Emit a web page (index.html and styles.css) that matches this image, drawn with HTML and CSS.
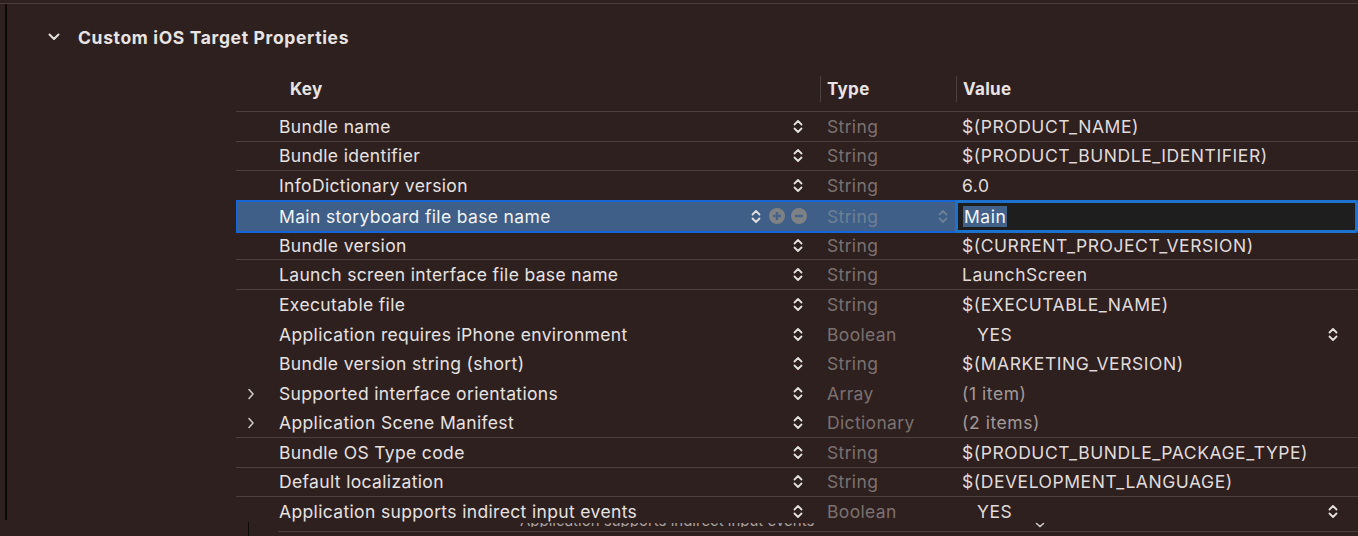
FILE: index.html
```html
<!DOCTYPE html>
<html>
<head>
<meta charset="utf-8">
<link rel="stylesheet" href="styles.css">
</head>
<body>
<div class="window">
  <div class="pane">
    <div class="section-title">
      <svg class="chev-down" width="12" height="8" viewBox="0 0 12 8"><path d="M1.5 1.5 L6 6 L10.5 1.5" fill="none" stroke="#e4e0df" stroke-width="2" stroke-linecap="round" stroke-linejoin="round"/></svg>
      <span>Custom iOS Target Properties</span>
    </div>
    <div class="table">
      <div class="thead">
        <div class="h-key">Key</div>
        <div class="h-type">Type</div>
        <div class="h-value">Value</div>
      </div>

      <div class="row sep">
        <div class="key"><span class="disc"></span><span class="name">Bundle name</span><span class="ctrl"><svg class="step" viewBox="0 0 10 16"><path d="M1.5 6 L5 2.5 L8.5 6 M1.5 10 L5 13.5 L8.5 10"/></svg></span></div>
        <div class="type">String</div>
        <div class="value">$(PRODUCT_NAME)</div>
      </div>
      <div class="row sep">
        <div class="key"><span class="disc"></span><span class="name">Bundle identifier</span><span class="ctrl"><svg class="step" viewBox="0 0 10 16"><path d="M1.5 6 L5 2.5 L8.5 6 M1.5 10 L5 13.5 L8.5 10"/></svg></span></div>
        <div class="type">String</div>
        <div class="value">$(PRODUCT_BUNDLE_IDENTIFIER)</div>
      </div>
      <div class="row sep">
        <div class="key"><span class="disc"></span><span class="name">InfoDictionary version</span><span class="ctrl"><svg class="step" viewBox="0 0 10 16"><path d="M1.5 6 L5 2.5 L8.5 6 M1.5 10 L5 13.5 L8.5 10"/></svg></span></div>
        <div class="type">String</div>
        <div class="value">6.0</div>
      </div>
      <div class="row selected">
        <div class="key sel-key"><span class="disc"></span><span class="name">Main storyboard file base name</span><span class="ctrl sel-ctrl"><svg class="step" viewBox="0 0 10 16"><path d="M1.5 6 L5 2.5 L8.5 6 M1.5 10 L5 13.5 L8.5 10"/></svg><svg class="pm" viewBox="0 0 16 16"><circle cx="8" cy="8" r="8" fill="#7f8285"/><path d="M4 8 H12 M8 4 V12" stroke="#44628a" stroke-width="2.4"/></svg><svg class="pm" viewBox="0 0 16 16"><circle cx="8" cy="8" r="8" fill="#7f8285"/><path d="M4 8 H12" stroke="#44628a" stroke-width="2.4"/></svg></span></div>
        <div class="type sel-type"><span>String</span><svg class="step faded" viewBox="0 0 10 16"><path d="M1.5 6 L5 2.5 L8.5 6 M1.5 10 L5 13.5 L8.5 10"/></svg></div>
        <div class="value editor"><span class="selection">Main</span></div>
      </div>
      <div class="row sep">
        <div class="key"><span class="disc"></span><span class="name">Bundle version</span><span class="ctrl"><svg class="step" viewBox="0 0 10 16"><path d="M1.5 6 L5 2.5 L8.5 6 M1.5 10 L5 13.5 L8.5 10"/></svg></span></div>
        <div class="type">String</div>
        <div class="value">$(CURRENT_PROJECT_VERSION)</div>
      </div>
      <div class="row sep">
        <div class="key"><span class="disc"></span><span class="name">Launch screen interface file base name</span><span class="ctrl"><svg class="step" viewBox="0 0 10 16"><path d="M1.5 6 L5 2.5 L8.5 6 M1.5 10 L5 13.5 L8.5 10"/></svg></span></div>
        <div class="type">String</div>
        <div class="value">LaunchScreen</div>
      </div>
      <div class="row">
        <div class="key"><span class="disc"></span><span class="name">Executable file</span><span class="ctrl"><svg class="step" viewBox="0 0 10 16"><path d="M1.5 6 L5 2.5 L8.5 6 M1.5 10 L5 13.5 L8.5 10"/></svg></span></div>
        <div class="type">String</div>
        <div class="value">$(EXECUTABLE_NAME)</div>
      </div>
      <div class="row">
        <div class="key"><span class="disc"></span><span class="name">Application requires iPhone environment</span><span class="ctrl"><svg class="step" viewBox="0 0 10 16"><path d="M1.5 6 L5 2.5 L8.5 6 M1.5 10 L5 13.5 L8.5 10"/></svg></span></div>
        <div class="type">Boolean</div>
        <div class="value bool"><span>YES</span><svg class="step" viewBox="0 0 10 16"><path d="M1.5 6 L5 2.5 L8.5 6 M1.5 10 L5 13.5 L8.5 10"/></svg></div>
      </div>
      <div class="row">
        <div class="key"><span class="disc"></span><span class="name">Bundle version string (short)</span><span class="ctrl"><svg class="step" viewBox="0 0 10 16"><path d="M1.5 6 L5 2.5 L8.5 6 M1.5 10 L5 13.5 L8.5 10"/></svg></span></div>
        <div class="type">String</div>
        <div class="value">$(MARKETING_VERSION)</div>
      </div>
      <div class="row">
        <div class="key"><span class="disc"><svg class="chev-right" viewBox="0 0 8 12"><path d="M2 1.5 L6 6 L2 10.5"/></svg></span><span class="name">Supported interface orientations</span><span class="ctrl"><svg class="step" viewBox="0 0 10 16"><path d="M1.5 6 L5 2.5 L8.5 6 M1.5 10 L5 13.5 L8.5 10"/></svg></span></div>
        <div class="type">Array</div>
        <div class="value dim">(1 item)</div>
      </div>
      <div class="row sep">
        <div class="key"><span class="disc"><svg class="chev-right" viewBox="0 0 8 12"><path d="M2 1.5 L6 6 L2 10.5"/></svg></span><span class="name">Application Scene Manifest</span><span class="ctrl"><svg class="step" viewBox="0 0 10 16"><path d="M1.5 6 L5 2.5 L8.5 6 M1.5 10 L5 13.5 L8.5 10"/></svg></span></div>
        <div class="type">Dictionary</div>
        <div class="value dim">(2 items)</div>
      </div>
      <div class="row sep">
        <div class="key"><span class="disc"></span><span class="name">Bundle OS Type code</span><span class="ctrl"><svg class="step" viewBox="0 0 10 16"><path d="M1.5 6 L5 2.5 L8.5 6 M1.5 10 L5 13.5 L8.5 10"/></svg></span></div>
        <div class="type">String</div>
        <div class="value">$(PRODUCT_BUNDLE_PACKAGE_TYPE)</div>
      </div>
      <div class="row sep">
        <div class="key"><span class="disc"></span><span class="name">Default localization</span><span class="ctrl"><svg class="step" viewBox="0 0 10 16"><path d="M1.5 6 L5 2.5 L8.5 6 M1.5 10 L5 13.5 L8.5 10"/></svg></span></div>
        <div class="type">String</div>
        <div class="value">$(DEVELOPMENT_LANGUAGE)</div>
      </div>
      <div class="row last">
        <div class="key"><span class="disc"></span><span class="name">Application supports indirect input events</span><span class="ctrl"><svg class="step" viewBox="0 0 10 16"><path d="M1.5 6 L5 2.5 L8.5 6 M1.5 10 L5 13.5 L8.5 10"/></svg></span></div>
        <div class="type">Boolean</div>
        <div class="value bool"><span>YES</span><svg class="step" viewBox="0 0 10 16"><path d="M1.5 6 L5 2.5 L8.5 6 M1.5 10 L5 13.5 L8.5 10"/></svg></div>
      </div>
      <div class="end-line"></div>
    </div>
  </div>
  <div class="ghost">
    <span class="ghost-text">Application supports indirect input events</span>
  </div>
  <svg class="ghost-chev" viewBox="0 0 10 6"><path d="M1.5 1.5 L5 4.5 L8.5 1.5"/></svg>
  <div class="stub"></div>
</div>
</body>
</html>
```

FILE: styles.css
```css
html, body {
  margin: 0;
  padding: 0;
  background: #2e201f;
  overflow: hidden;
}
body {
  width: 1358px;
  height: 536px;
  font-family: "Inter", "Liberation Sans", sans-serif;
  color: #e4e0df;
  -webkit-font-smoothing: antialiased;
}
.window {
  position: relative;
  margin-top: 3px;
  border-top: 1px solid #4a3d3c;
  height: 532px;
}
.pane {
  margin-left: 5px;
  border-left: 2px solid #0e0909;
  height: 516px;
  padding-top: 21px;
  box-sizing: border-box;
}
.section-title {
  display: flex;
  align-items: center;
  height: 24px;
  padding-left: 41px;
  font-weight: 700;
  font-size: 17.5px;
  letter-spacing: 0.65px;
  color: #e8e4e3;
}
.chev-down {
  margin-right: 18px;
}
.table {
  margin-top: 25px;
  margin-left: 229px;
}
.thead {
  display: grid;
  grid-template-columns: 584px 136px 1fr;
  height: 38px;
  box-sizing: border-box;
  padding-bottom: 8px;
  border-bottom: 1px solid #4d403f;
  font-weight: 700;
  font-size: 17px;
  letter-spacing: 0.3px;
  color: #e8e4e3;
  align-items: center;
}
.h-key {
  padding-left: 54px;
}
.h-type, .h-value {
  border-left: 1px solid #4d403f;
  height: 26px;
  line-height: 26px;
  padding-left: 6px;
}
.row {
  display: grid;
  grid-template-columns: 584px 136px 1fr;
  height: 29.6px;
  box-sizing: border-box;
  align-items: center;
  font-size: 17.5px;
  letter-spacing: 0.35px;
}
.row.sep {
  border-bottom: 1px solid #4d403f;
}
.key {
  display: flex;
  align-items: center;
  height: 100%;
}
.disc {
  width: 43px;
  flex: none;
  display: flex;
  align-items: center;
  padding-left: 11px;
  box-sizing: border-box;
}
.chev-right {
  width: 8px;
  height: 12px;
  fill: none;
  stroke: #cfcac9;
  stroke-width: 1.5;
  stroke-linecap: round;
  stroke-linejoin: round;
}
.name {
  flex: 1;
  white-space: nowrap;
  color: #e6e2e1;
}
.ctrl {
  display: flex;
  align-items: center;
  padding-right: 17px;
}
.step {
  width: 10px;
  height: 17px;
  fill: none;
  stroke: #e4e0df;
  stroke-width: 1.8;
  stroke-linecap: round;
  stroke-linejoin: round;
}
.step.faded {
  stroke: #6e7f95;
}
.type {
  padding-left: 7px;
  color: #7c7170;
}
.value {
  padding-left: 6px;
  color: #e0dcdb;
  white-space: nowrap;
  letter-spacing: 0.55px;
}
.value.dim {
  color: #a39998;
}
.value.bool {
  display: flex;
  align-items: center;
  justify-content: space-between;
  padding-left: 21px;
  padding-right: 20px;
}
.selected {
  height: 31px;
  margin-top: -1px;
}
.sel-key {
  background: #3f5f88;
  border: 2px solid #1766d8;
  border-right: none;
  box-sizing: border-box;
}
.sel-key .disc {
  width: 41px;
}
.sel-key .name {
  color: #f2f4f8;
}
.sel-ctrl {
  padding-right: 13px;
  gap: 6px;
}
.sel-ctrl .step {
  margin-right: 2px;
}
.pm {
  width: 16px;
  height: 16px;
}
.sel-type {
  display: flex;
  align-items: center;
  justify-content: space-between;
  height: 100%;
  box-sizing: border-box;
  background: #3f5f88;
  border-top: 2px solid #1766d8;
  border-bottom: 2px solid #1766d8;
  padding-right: 8px;
  color: #6f7f93;
}
.editor {
  height: 33px;
  box-sizing: border-box;
  margin-left: -1px;
  background: #1f1e1f;
  border: 3px solid #1b72cf;
  border-radius: 2px;
  padding-left: 5px;
  display: flex;
  align-items: center;
}
.selection {
  background: #41608a;
  color: #f4f6fa;
  padding: 1px 1px;
  line-height: 19px;
}
.end-line {
  margin-top: 4px;
  margin-left: 42px;
  border-top: 1px solid #4d403f;
}
.ghost {
  position: absolute;
  left: 520px;
  top: 519px;
  height: 4px;
  width: 400px;
  overflow: hidden;
}
.ghost-text {
  display: block;
  font-size: 15px;
  line-height: 15px;
  margin-top: -10px;
  color: #a9a3a2;
  white-space: nowrap;
}
.ghost-chev {
  position: absolute;
  left: 1035px;
  top: 518px;
  width: 10px;
  height: 6px;
  fill: none;
  stroke: #cfcac9;
  stroke-width: 1.6;
  stroke-linecap: round;
}
.stub {
  position: absolute;
  left: 248px;
  top: 518px;
  width: 1px;
  height: 14px;
  background: #0e0909;
}
```
